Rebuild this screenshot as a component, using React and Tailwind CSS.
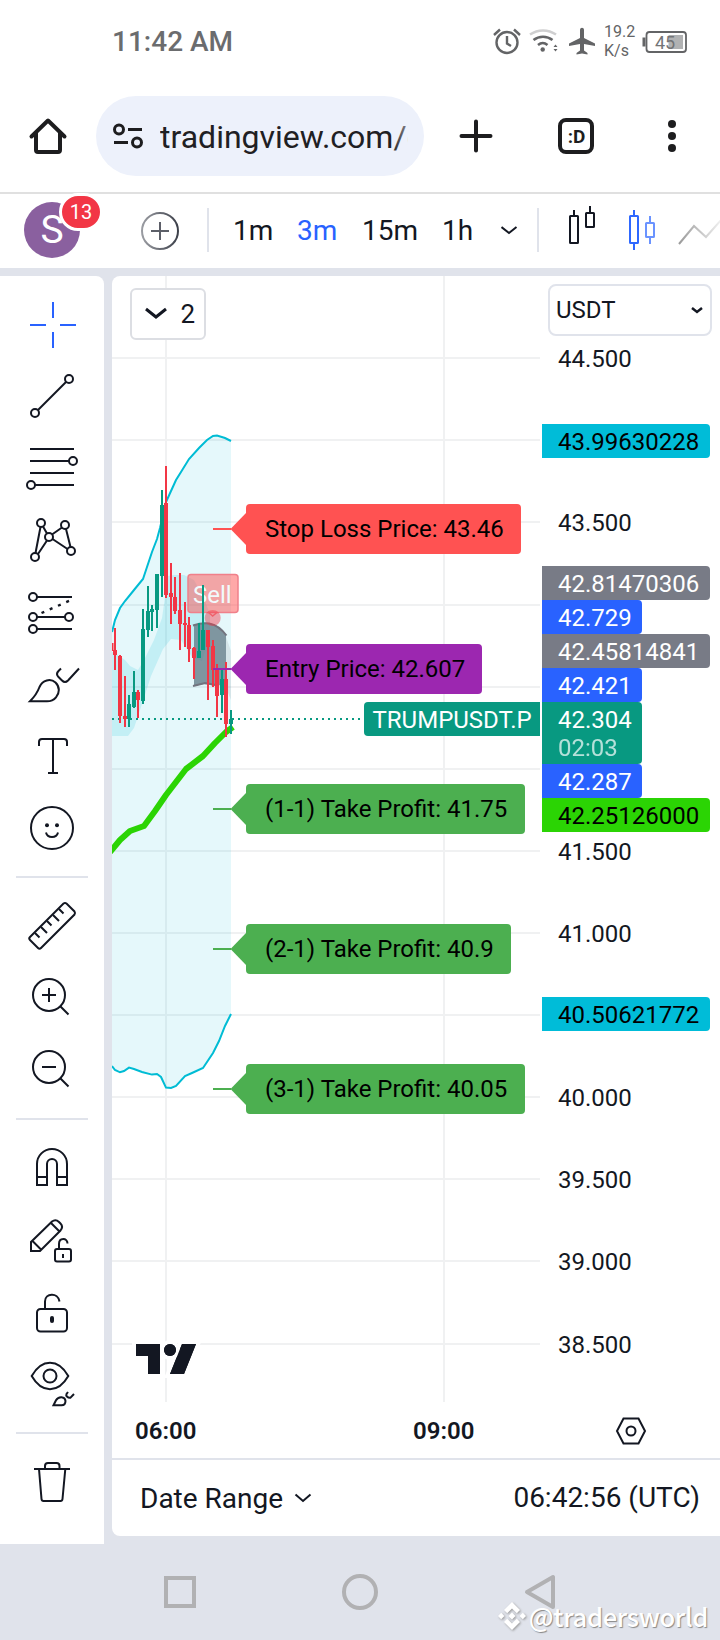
import React from "react";

const intervals = [
  { label: "1m", width: "w-[64px]" },
  { label: "3m", width: "w-[65px]", active: true },
  { label: "15m", width: "w-[80px]" },
  { label: "1h", width: "w-[57px]" },
];

const axisPrices = [
  { label: "44.500", y: 358 },
  { label: "43.500", y: 522 },
  { label: "41.500", y: 851 },
  { label: "41.000", y: 933 },
  { label: "40.000", y: 1097 },
  { label: "39.500", y: 1179 },
  { label: "39.000", y: 1261 },
  { label: "38.500", y: 1344 },
];

const axisTags = [
  { label: "43.99630228", y: 424, style: "w-[168px] bg-[#00bcd8] text-black" },
  { label: "42.81470306", y: 566, style: "w-[168px] bg-[#787b86] text-white" },
  { label: "42.729", y: 600, style: "w-[100px] bg-[#2962ff] text-white" },
  { label: "42.45814841", y: 634, style: "w-[168px] bg-[#787b86] text-white" },
  { label: "42.421", y: 668, style: "w-[100px] bg-[#2962ff] text-white" },
  { label: "42.304", y: 702, note: "02:03", style: "w-[100px] bg-[#089981] text-white" },
  { label: "42.287", y: 764, style: "w-[100px] bg-[#2962ff] text-white" },
  { label: "42.25126000", y: 798, style: "w-[168px] bg-[#2bd404] text-black" },
  { label: "40.50621772", y: 997, style: "w-[168px] bg-[#00bcd8] text-black" },
];

const gridRows = [358, 440, 522, 605, 687, 769, 851, 933, 1015, 1097, 1179, 1261, 1344];

// x, high, body top, body bottom, low, up?
const candles = [
  [115, 628, 650, 655, 670, 0],
  [120, 655, 656, 716, 723, 0],
  [125, 676, 716, 719, 727, 0],
  [129, 695, 704, 719, 727, 1],
  [134, 671, 692, 707, 708, 1],
  [138, 690, 692, 700, 718, 0],
  [143, 609, 629, 701, 704, 1],
  [148, 586, 611, 630, 637, 1],
  [152, 605, 609, 612, 631, 1],
  [157, 574, 574, 610, 628, 1],
  [162, 490, 505, 576, 597, 1],
  [166, 466, 503, 595, 598, 0],
  [171, 563, 593, 597, 624, 0],
  [175, 577, 597, 611, 614, 0],
  [180, 573, 610, 624, 650, 0],
  [185, 602, 623, 625, 647, 0],
  [189, 617, 625, 649, 662, 0],
  [194, 647, 648, 658, 679, 0],
  [199, 623, 651, 658, 658, 1],
  [203, 585, 630, 650, 650, 1],
  [208, 630, 630, 647, 700, 0],
  [213, 640, 646, 670, 687, 0],
  [217, 664, 668, 696, 717, 0],
  [222, 669, 679, 695, 713, 1],
  [226, 662, 679, 724, 737, 0],
  [231, 710, 719, 724, 734, 1],
];

const callouts = [
  { text: "Stop Loss Price: 43.46", y: 529, right: 521, color: "#ff5252" },
  { text: "Entry Price: 42.607", y: 669, right: 482, color: "#9c27b0" },
  { text: "(1-1) Take Profit: 41.75", y: 809, right: 525, color: "#4caf50" },
  { text: "(2-1) Take Profit: 40.9", y: 949, right: 511, color: "#4caf50" },
  { text: "(3-1) Take Profit: 40.05", y: 1089, right: 525, color: "#4caf50" },
];

const upperBand =
  "112,632 115,620 120,608 125,601 134,590 143,579 147,567 152,552 157,539 160,528 166,502 171,491 176,480 181,472 189,459 199,448 207,440 213,436 217,435.6 225,438 231,441";
const lowerBand =
  "231,1014 225,1026 219,1041 213,1053 203,1068 192,1073 185,1076 176,1086 171,1088 166,1087.6 161,1077 157,1074 152,1074.6 142,1072 134,1069 129,1067.6 124,1071 120,1072.3 115,1070 112,1066";

function ToolIcon({ children, color = "#131722" }) {
  return (
    <svg width="104" height="72" viewBox="0 0 104 72" fill="none" stroke={color} strokeWidth="2" className="block shrink-0">
      {children}
    </svg>
  );
}

function Divider() {
  return <div className="mx-4 my-3 h-0.5 shrink-0 bg-[#e0e3eb]" />;
}

function StatusBar() {
  return (
    <div className="flex h-20 items-center pl-[112px] pr-[29px] pt-[3px] text-[#6b6c6e]">
      <span className="w-[379px] text-[28px] font-medium leading-none">11:42 AM</span>
      <svg width="200" height="40" viewBox="491 21 200 40" fill="none" stroke="#636466" className="shrink-0">
        <circle cx="507" cy="41.500" r="10.500" strokeWidth="2.400" />
        <path d="M507 35v7.500l4 2.500M494 34l6-5.500M514 28.500l6 5.500" strokeWidth="2.400" />
        <path d="M530 33.500c8-5.500 18-5.500 26 0" stroke="#cfcfd0" strokeWidth="2.500" />
        <path d="M533.500 39c5.500-4.500 13.500-4.500 19 0M538 44c3-2.600 6.500-2.600 9.500 0" strokeWidth="2.500" />
        <circle cx="542.700" cy="48.500" r="2.200" fill="#636466" stroke="none" />
        <path d="M553.500 46l2-2.500 2 2.500zM553.500 48l2 2.500 2-2.500z" fill="#636466" stroke="none" />
        <path
          d="M580 29c0-3 4-3 4 0v8l11 5.500v2.500l-11-2v6.500l3.500 2.500v1.500l-5.500-1-5.500 1v-1.500l3.500-2.500v-6.500l-11 2v-2.500l11-5.500z"
          fill="#636466"
          stroke="none"
        />
        <text x="604" y="36" fontSize="16" fill="#636466" stroke="none">19.2</text>
        <text x="604" y="55" fontSize="16" fill="#636466" stroke="none">K/s</text>
        <rect x="646.500" y="31" width="39.500" height="20" rx="3" strokeWidth="1.800" />
        <path d="M644 36.500v9" strokeWidth="3" />
        <rect x="668.500" y="34" width="14.500" height="14" fill="#b1b2b3" stroke="none" />
        <text x="655" y="47.500" fontSize="18" fill="#737476" stroke="none">45</text>
      </svg>
    </div>
  );
}

function BrowserBar() {
  return (
    <div className="flex h-[114px] items-center border-b-2 border-[#e0e0e0] text-[#1f2023]">
      <svg width="96" height="80" viewBox="0 96 96 80" fill="none" stroke="#1d1d1f" strokeWidth="4" className="shrink-0">
        <path d="M31.500 136.500L48 120.500l16.500 16" strokeLinejoin="round" strokeLinecap="round" />
        <path d="M36 133v17q0 2 2 2h20q2 0 2-2v-17" />
      </svg>
      <div className="flex h-20 w-[328px] shrink-0 items-center rounded-full bg-[#edf1fb]">
        <svg width="64" height="80" viewBox="96 96 64 80" fill="none" stroke="#1d1d1f" strokeWidth="3" className="shrink-0">
          <circle cx="119" cy="129.500" r="4.500" />
          <circle cx="137" cy="142.500" r="4.500" />
          <path d="M128 129.500h14M114 142.500h14" />
        </svg>
        <div className="relative mt-0.5 w-[248px] overflow-hidden whitespace-nowrap text-[32px] leading-10">
          tradingview.com/c
          <div className="absolute right-0 top-0 h-10 w-4 bg-linear-to-r from-transparent to-[#edf1fb]/50" />
        </div>
      </div>
      <svg width="296" height="80" viewBox="424 96 296 80" fill="none" stroke="#1d1d1f" strokeWidth="4" className="shrink-0">
        <path d="M461.500 136h29M476 121.500v29" strokeLinecap="round" />
        <rect x="560" y="120" width="32" height="32" rx="6" />
        <text x="576.500" y="142.500" fontSize="19" fontWeight="700" fill="#1d1d1f" stroke="none" textAnchor="middle">:D</text>
        <g fill="#1d1d1f" stroke="none">
          <circle cx="672" cy="124" r="4" />
          <circle cx="672" cy="136" r="4" />
          <circle cx="672" cy="148" r="4" />
        </g>
      </svg>
    </div>
  );
}

function Toolbar() {
  return (
    <div className="flex h-[74px] items-center text-[#131722]">
      <div className="relative ml-6 mt-[-2px] flex size-14 shrink-0 items-center justify-center rounded-full bg-[#8a609f] text-[39px] leading-none text-white">
        S
        <span className="absolute -top-[9px] left-[35px] flex h-[38px] w-11 items-center justify-center rounded-full border-3 border-white bg-[#f23645] text-xl leading-none">
          13
        </span>
      </div>
      <svg width="155" height="74" viewBox="80 194 155 74" fill="none" strokeWidth="2" className="shrink-0">
        <defs>
          <linearGradient id="ring" x1="0" x2="1" y1="0" y2="0">
            <stop offset="0" stopColor="#9a9ca2" />
            <stop offset="1" stopColor="#3c404a" />
          </linearGradient>
        </defs>
        <circle cx="160" cy="231" r="18" stroke="url(#ring)" />
        <path d="M151 231h18M160 222v18" stroke="#5c5f68" />
        <path d="M208 208v44" stroke="#e0e3eb" />
      </svg>
      {intervals.map((item) => (
        <span
          key={item.label}
          className={`${item.width} shrink-0 -translate-x-0.5 text-[28px] leading-none ${item.active ? "text-[#2962ff]" : ""}`}
        >
          {item.label}
        </span>
      ))}
      <svg width="219" height="74" viewBox="501 194 219 74" fill="none" stroke="#131722" strokeWidth="2" className="shrink-0">
        <path d="M501.500 227l7.500 6 7.500-6" />
        <path d="M538 208v44" stroke="#e0e3eb" />
        <path d="M574 210v6M590 206v6" />
        <rect x="570" y="216" width="8" height="27" rx="0.500" />
        <rect x="586" y="213" width="8" height="14" rx="0.500" />
        <g stroke="#2f68ff">
          <path d="M634 210v6M634 243v7" />
          <rect x="630" y="216" width="8" height="27" rx="0.500" />
        </g>
        <g stroke="#6a93ff">
          <path d="M650 216v6M650 238v6" />
          <rect x="646" y="223" width="8" height="14" rx="0.500" />
        </g>
        <defs>
          <linearGradient id="fade" gradientUnits="userSpaceOnUse" x1="678" x2="720" y1="0" y2="0">
            <stop offset="0" stopColor="#999" />
            <stop offset="1" stopColor="#eee" />
          </linearGradient>
        </defs>
        <path d="M679 244l15-18 12 11 16-18" stroke="url(#fade)" />
      </svg>
    </div>
  );
}

function Sidebar() {
  return (
    <div className="flex h-[1268px] w-[104px] shrink-0 flex-col rounded-tr-lg bg-white pt-3">
      <ToolIcon color="#2962ff">
        <path d="M53 14v16M53 44v16M30 37h16M60 37h16" />
      </ToolIcon>
      <ToolIcon>
        <circle cx="69" cy="19" r="4" />
        <circle cx="35" cy="53" r="4" />
        <path d="M38 50l28-28" />
      </ToolIcon>
      <ToolIcon>
        <path d="M30 17h44M30 29h39M30 41h44M35 53h39" />
        <circle cx="73" cy="29" r="4" />
        <circle cx="31" cy="53" r="4" />
      </ToolIcon>
      <ToolIcon>
        <circle cx="41" cy="19" r="4" />
        <circle cx="65" cy="21" r="4" />
        <circle cx="49" cy="33" r="4" />
        <circle cx="71" cy="47" r="4" />
        <circle cx="35" cy="53" r="4" />
        <path d="M40.500 23l-5 26M43 22.500l4 7M52 30.500l10-7M52.500 35l15 10M66 25l4.500 18M38 50l9-13.500" />
      </ToolIcon>
      <ToolIcon>
        <circle cx="33" cy="21" r="4" />
        <circle cx="33" cy="41" r="4" />
        <circle cx="33" cy="53" r="4" />
        <circle cx="69" cy="41" r="4" />
        <path d="M37 21h35M37 41h28M37 53h35" />
        <path d="M41.500 37L70 24.500" strokeDasharray="3 6" strokeWidth="2.400" />
      </ToolIcon>
      <ToolIcon>
        <path d="M30 53.300c5.500-5.500 7.500-9 9.500-14.300 3-7 11-9 16-4.500 4.500 4.500 4.200 10.500.5 14.800-2.500 3-5.500 4-9 4z" />
        <path d="M61 20.500l-2.500 2.500c-2 2-2 4 0 6l3.500 3.500c2 2 4 2 6 0L79 20.500" />
      </ToolIcon>
      <ToolIcon>
        <path d="M39 26v-4q0-3 3-3h22q3 0 3 3v4M53 19v34M48 53h10" />
      </ToolIcon>
      <ToolIcon>
        <circle cx="52" cy="36" r="21" />
        <circle cx="47" cy="33.300" r="2" fill="#131722" stroke="none" />
        <circle cx="57" cy="33.300" r="2" fill="#131722" stroke="none" />
        <path d="M46 40.500c1.500 6 10.500 6 12 0" />
      </ToolIcon>
      <Divider />
      <ToolIcon>
        <path d="M63.500 13.500q1.500-1 3 0l8 8q1 1.500 0 3L41 58q-1.500 1.500-3 0l-8-8q-1.500-1.500 0-3z" />
        <path d="M35 43l4.500 4.500M41 37l6 6M47 31l4.500 4.500M53 25l6 6M59 19l4.500 4.500" />
      </ToolIcon>
      <ToolIcon>
        <circle cx="49" cy="33" r="16" />
        <path d="M42 33h14M49 26v14M60.500 44.500l8 8" />
      </ToolIcon>
      <ToolIcon>
        <circle cx="49" cy="33" r="16" />
        <path d="M42 33h14M60.500 44.500l8 8" />
      </ToolIcon>
      <Divider />
      <ToolIcon>
        <path d="M37 53V32a15 15 0 0 1 30 0v21H57V32a5 5 0 0 0-10 0v21zM37 45h10M57 45h10" />
      </ToolIcon>
      <ToolIcon>
        <path d="M31 47V38l21-20.500c2.500-2 5-1.500 7 .5l1.500 1.500c2 2 2 4.500 0 7L40 47zM51 19l8 8M32.500 37l8.500 8.500" />
        <rect x="55" y="45" width="16" height="12.500" rx="2" />
        <path d="M59 45v-5c0-6.500 8.500-6.500 8.500-.5M63 50v4" />
      </ToolIcon>
      <ToolIcon>
        <rect x="37" y="33" width="30" height="22.500" rx="3.500" />
        <path d="M45 33v-7.500c0-8.500 13-9.500 14.500 0" />
        <path d="M52 42v3" strokeWidth="4" strokeLinecap="round" />
      </ToolIcon>
      <ToolIcon>
        <path d="M31.700 28C36 20.500 42.500 14.800 50 14.800S64 20.500 68.300 28C64 35.500 57.500 41.200 50 41.200S36 35.500 31.700 28z" />
        <circle cx="50" cy="28" r="6.500" />
        <path d="M53.500 57.300l2.500-5c2.500-4.500 9-4 9.500.5 0 3-1.500 4.500-4 4.500z" />
        <path d="M68 44l-1.500 2c-1 2 1.500 4.200 4 3.700L74 46" />
      </ToolIcon>
      <Divider />
      <ToolIcon>
        <path d="M34 23h36M45 23v-3q0-3 3-3h8.500q3 0 3 3v3M39 23l2.500 30q.2 2 2 2h17q1.800 0 2-2L65.300 23" />
      </ToolIcon>
    </div>
  );
}

function ChartDrawing() {
  return (
    <svg width="430" height="1128" viewBox="112 276 430 1128" className="block" fill="none">
      <g fill="#f0f1f2">
        {gridRows.map((y) => (
          <rect key={y} x="112" y={y - 1} width="428" height="2" />
        ))}
        <rect x="165" y="276" width="2" height="1126" />
        <rect x="443" y="276" width="2" height="1126" />
      </g>

      <polygon points={`${upperBand} ${lowerBand}`} fill="#00bcd4" fillOpacity="0.1" />
      <path
        d="M112 652l6 3 7 5 5 6 8 4 6-10 10-20 8-22 6-42 6-1 10 0 10 5 9 16 7 18v23l-8 24-10-4-11 -17-10-1-8 10-12 27-9 28-8 24-6 8h-31z"
        fill="#00bcd4"
        fillOpacity="0.15"
      />
      <polyline points={upperBand} stroke="#00bcd4" strokeWidth="2" />
      <polyline points={lowerBand} stroke="#00bcd4" strokeWidth="2" />
      <path d="M226 637l5 14v49l-5-12z" fill="#787b86" fillOpacity="0.15" />
      <path d="M194 625c10-4 24-4 32 10v49l-10 2-12-2-10 2z" fill="#5c7682" fillOpacity="0.75" />
      <path d="M193 625.500c10-3.500 22-5 33.500 10M193 686l12-3 11 2" stroke="#72747f" strokeWidth="2" />

      <path d="M112 719h252" stroke="#089981" strokeWidth="2" strokeDasharray="2 4" />
      <polyline
        points="110,852 120,840 130,831 144,826 155,811 166,795 186,769 203,756 215,743 226,732 233,727"
        stroke="#2bd404"
        strokeWidth="6"
        strokeLinejoin="round"
      />

      <rect x="188" y="574.500" width="50" height="38" rx="3" fill="#ff5252" fillOpacity="0.5" stroke="#f0808a" strokeWidth="1.500" />
      <circle cx="212.700" cy="618" r="8" fill="#f23645" fillOpacity="0.45" />
      <path d="M208 612l4.700 4 4.700-4" stroke="#f0606a" strokeWidth="1.500" />
      <text x="193" y="603" fontSize="24" fill="#f1fafc">Sell</text>

      <rect x="112" y="643" width="1.500" height="8" fill="#f23645" />
      {candles.map(([x, high, top, bottom, low, up]) => (
        <g key={x} fill={up ? "#089981" : "#f23645"}>
          <rect x={x - 1} y={high} width="2" height={low - high} />
          <rect x={x - 2} y={top} width="4" height={bottom - top} />
        </g>
      ))}

      {callouts.map((item) => (
        <g key={item.text}>
          <path
            d={`M213 ${item.y}H231`}
            stroke={item.color}
            strokeWidth="2"
          />
          <path d={`M230.500 ${item.y}L246 ${item.y - 16}V${item.y + 16}Z`} fill={item.color} />
          <rect x="246" y={item.y - 25} width={item.right - 246} height="50" rx="4" fill={item.color} />
          <text x="265" y={item.y + 8} fontSize="24" fill="#000">{item.text}</text>
        </g>
      ))}

      <path d="M540 702H368q-4 0-4 4v26q0 4 4 4H540z" fill="#089981" />
      <text x="372.500" y="728" fontSize="24" fill="#fff">TRUMPUSDT.P</text>

      <g fill="#131722" stroke="#fff" strokeWidth="8" paintOrder="stroke">
        <path d="M136 1344h24v30h-12v-18h-12z" />
        <path d="M182 1344h14l-12 30h-14z" />
        <circle cx="170" cy="1350" r="6" />
      </g>
      <g fill="#131722">
        <path d="M136 1344h24v30h-12v-18h-12z" />
        <path d="M182 1344h14l-12 30h-14z" />
        <circle cx="170" cy="1350" r="6" />
      </g>
    </svg>
  );
}

function PriceAxis() {
  return (
    <div className="relative w-[178px] shrink-0 text-2xl">
      <div className="absolute left-1.5 top-2 flex h-[52px] w-[164px] items-center justify-between rounded-lg border-2 border-[#e0e3eb] bg-white pl-1.5 pr-1.5 text-[#131722]">
        <span className="leading-none">USDT</span>
        <svg width="14" height="8" viewBox="0 0 14 8" fill="none" stroke="#131722" strokeWidth="2.500">
          <path d="M2 2l5 4 5-4" />
        </svg>
      </div>
      {axisPrices.map((price) => (
        <span
          key={price.label}
          className="absolute left-4 -translate-y-1/2 leading-none text-[#131722]"
          style={{ top: price.y - 275 }}
        >
          {price.label}
        </span>
      ))}
      {axisTags.map((tag) => (
        <div
          key={tag.label}
          className={`absolute left-0 rounded-r pl-4 leading-[36px] ${tag.note ? "h-[62px]" : "h-[34px]"} ${tag.style}`}
          style={{ top: tag.y - 276 }}
        >
          {tag.label}
          {tag.note && <div className="leading-[20px] opacity-70">{tag.note}</div>}
        </div>
      ))}
    </div>
  );
}

function ChartPanel() {
  return (
    <div className="flex h-[1260px] w-[608px] flex-col overflow-hidden rounded-l-lg bg-white text-[#131722]">
      <div className="flex h-[1128px]">
        <div className="relative w-[430px] shrink-0">
          <ChartDrawing />
          <div className="absolute left-[18px] top-3 flex h-[52px] w-[76px] items-center justify-between rounded-md border-2 border-[#dcdee3] bg-white pl-3 pr-[9px]">
            <svg width="24" height="14" viewBox="0 0 24 14" fill="none" stroke="#131722" strokeWidth="3">
              <path d="M2 2l10 8 10-8" />
            </svg>
            <span className="text-[26px] leading-none">2</span>
          </div>
        </div>
        <PriceAxis />
      </div>
      <div className="flex h-[54px] shrink-0 items-center pl-[23px] text-2xl font-semibold">
        <span className="w-[278px]">06:00</span>
        <span className="w-[202px]">09:00</span>
        <svg width="32" height="30" viewBox="0 0 32 30" fill="none" stroke="#131722" strokeWidth="2">
          <path d="M8.500 2.500h15L30 15l-6.500 12.500h-15L2 15z" />
          <circle cx="16" cy="15" r="4.500" />
        </svg>
      </div>
      <div className="flex h-[78px] shrink-0 items-center border-t-2 border-[#e0e3eb] pl-7 pr-5 text-[28px]">
        <span className="pt-0.5">Date Range</span>
        <svg width="18" height="10" viewBox="0 0 18 10" fill="none" stroke="#131722" strokeWidth="2" className="ml-[11px]">
          <path d="M1.500 1.500L9 8l7.500-6.500" />
        </svg>
        <span className="ml-auto">06:42:56 (UTC)</span>
      </div>
    </div>
  );
}

function NavBar() {
  return (
    <div className="relative h-24">
      <svg width="720" height="96" viewBox="0 1544 720 96" fill="none" stroke="#b1b1b3" strokeWidth="4" className="block">
        <rect x="166" y="1578" width="28" height="28" />
        <circle cx="360" cy="1592" r="16" />
        <path d="M553 1577v30L527 1592z" strokeLinejoin="round" />
      </svg>
      <div className="absolute bottom-1.5 right-3 flex items-center gap-[3px] text-white">
        <svg width="28" height="30" viewBox="0 0 28 30" fill="currentColor" className="drop-shadow-[1px_1px_1px_#999]">
          <path d="M14 1l8 8-3.200 3.200L14 7.400l-4.800 4.800L6 9zM14 11.500l3.500 3.500-3.500 3.500-3.500-3.500zM3.200 11.800L6.400 15l-3.200 3.200L0 15zM24.800 11.800L28 15l-3.200 3.200-3.200-3.200zM9.200 17.800l4.800 4.800 4.800-4.800L22 21l-8 8-8-8z" />
        </svg>
        <span className="font-['Noto_Sans_CJK_SC',sans-serif] text-[25.5px] font-medium leading-9 tracking-[-0.3px] [text-shadow:1px_1px_1px_#888]">
          @tradersworld
        </span>
      </div>
    </div>
  );
}

export default function App() {
  return (
    <div className="h-[1640px] w-[720px] overflow-hidden bg-white font-['Roboto',sans-serif]">
      <StatusBar />
      <BrowserBar />
      <Toolbar />
      <div className="bg-[#e0e3eb] pt-2">
        <div className="flex gap-2">
          <Sidebar />
          <ChartPanel />
        </div>
        <NavBar />
      </div>
    </div>
  );
}
